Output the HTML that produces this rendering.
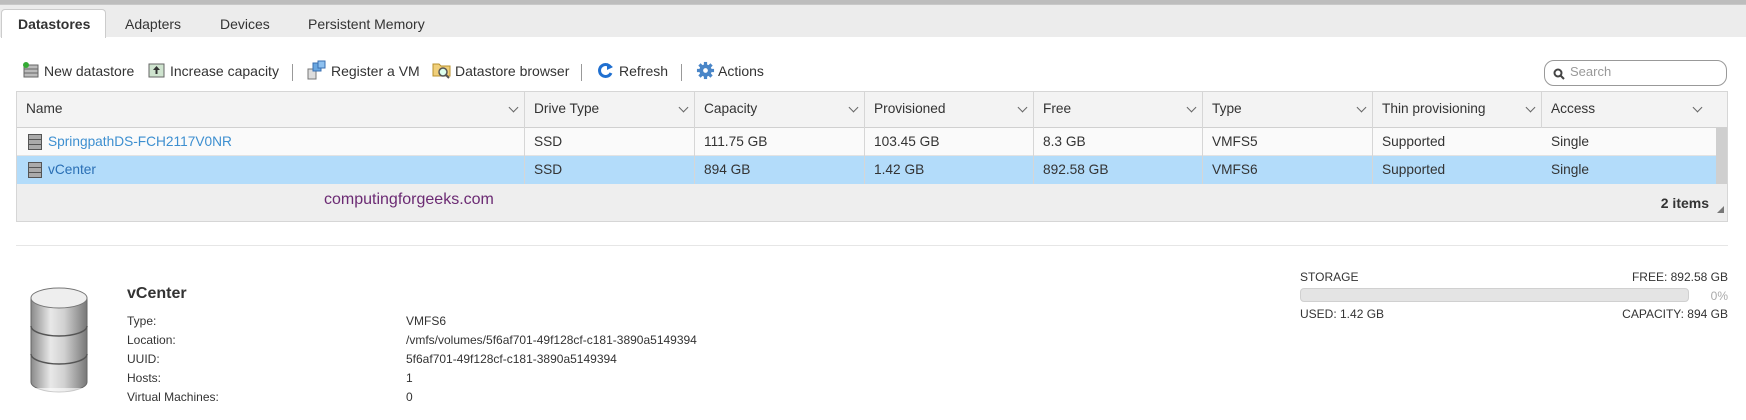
<!DOCTYPE html>
<html><head><meta charset="utf-8"><style>
*{margin:0;padding:0;box-sizing:border-box}
body{width:1746px;height:420px;background:#fff;font-family:"Liberation Sans",Arial,sans-serif;color:#333;position:relative;overflow:hidden;font-size:14px}
.a{position:absolute;white-space:nowrap}
.tabbar{position:absolute;left:0;top:4px;width:1746px;height:33px;background:#ececec;border-top:1px solid #c8c8c8}
.topline{position:absolute;left:0;top:0;width:1746px;height:4px;background:#bdbdbd}
.tab{position:absolute;top:16px;font-size:14px;color:#333}
.acttab{position:absolute;left:1px;top:9px;width:105px;height:29px;background:#fff;border:1px solid #ccc;border-bottom:none;border-radius:4px 4px 0 0}
.tb{position:absolute;top:63px;font-size:14px;color:#333}
.sep{position:absolute;top:64px;width:1px;height:17px;background:#999}
.tbl{position:absolute;left:16px;top:91px;width:1712px;height:131px;border:1px solid #d6d6d6;background:#eee}
.hdr{position:absolute;left:0;top:0;width:1710px;height:36px;background:#f3f3f3;border-bottom:1px solid #d0d0d0}
.r1{position:absolute;left:0;top:36px;width:1699px;height:28px;background:#fafafa;border-bottom:1px solid #e3e3e3}
.r2{position:absolute;left:0;top:64px;width:1699px;height:28px;background:#b3dcfa}
.vl{position:absolute;width:1px;background:#d6d6d6}
.cell{position:absolute;font-size:13.7px;color:#333}
.chev{position:absolute;width:7px;height:7px;border-right:1.3px solid #666;border-bottom:1.3px solid #666;transform:rotate(45deg);top:12px}
.lbl{position:absolute;left:127px;font-size:12px;color:#333}
.val{position:absolute;left:406px;font-size:12px;color:#333}
.st{position:absolute;font-size:12px;color:#333}
</style></head><body>
<div class="topline"></div>
<div class="tabbar"></div>
<div class="acttab"></div>
<div class="tab a" style="left:18px;font-weight:bold">Datastores</div>
<div class="tab a" style="left:125px">Adapters</div>
<div class="tab a" style="left:220px">Devices</div>
<div class="tab a" style="left:308px">Persistent Memory</div>

<svg class="a" style="left:22px;top:62px" width="18" height="16"><rect x="2" y="3" width="14" height="12" fill="#bbb" stroke="#666"/><line x1="2" y1="7" x2="16" y2="7" stroke="#666"/><line x1="2" y1="11" x2="16" y2="11" stroke="#666"/><circle cx="4" cy="3" r="3" fill="#3a3"/></svg>
<div class="tb a" style="left:44px">New datastore</div>
<svg class="a" style="left:148px;top:62px" width="18" height="16"><rect x="1" y="2" width="15" height="13" fill="#cfe4cf" stroke="#666"/><path d="M8.5 4 L5 8 H7.5 V12 H9.5 V8 H12 Z" fill="#333"/></svg>
<div class="tb a" style="left:170px">Increase capacity</div>
<div class="sep" style="left:292px"></div>
<svg class="a" style="left:307px;top:60px" width="20" height="20"><rect x="1" y="9" width="8" height="10" fill="#ddd" stroke="#777"/><rect x="6" y="3" width="8" height="8" fill="#6aa7e0" stroke="#3a6fb0"/><rect x="11" y="1" width="7" height="7" fill="#8ec1f0" stroke="#3a6fb0"/></svg>
<div class="tb a" style="left:331px">Register a VM</div>
<svg class="a" style="left:432px;top:60px" width="20" height="20"><path d="M1 4 H7 L9 6 H18 V16 H1 Z" fill="#f0cf7a" stroke="#b8902c"/><circle cx="11" cy="12" r="4" fill="#dfe" stroke="#555" stroke-width="1.5"/><line x1="14" y1="15" x2="17" y2="18" stroke="#555" stroke-width="2"/></svg>
<div class="tb a" style="left:455px">Datastore browser</div>
<div class="sep" style="left:581px"></div>
<svg class="a" style="left:597px;top:61px" width="18" height="18"><path d="M14 7 A6 6 0 1 0 14 12" fill="none" stroke="#1f6fd0" stroke-width="3"/><path d="M10 2 L16 6 L10 9 Z" fill="#1f6fd0"/></svg>
<div class="tb a" style="left:619px">Refresh</div>
<div class="sep" style="left:681px"></div>
<svg class="a" style="left:696px;top:61px" width="19" height="19" viewBox="0 0 20 20"><g fill="#4a86c8"><circle cx="10" cy="10" r="6.5"/><rect x="8.3" y="1" width="3.4" height="18"/><rect x="1" y="8.3" width="18" height="3.4"/><rect x="8.3" y="1" width="3.4" height="18" transform="rotate(45 10 10)"/><rect x="8.3" y="1" width="3.4" height="18" transform="rotate(-45 10 10)"/></g><circle cx="10" cy="10" r="2.5" fill="#fff"/></svg>
<div class="tb a" style="left:718px">Actions</div>

<div class="a" style="left:1544px;top:60px;width:183px;height:26px;border:1px solid #999;border-radius:10px;background:#fff"></div>
<svg class="a" style="left:1553px;top:68px" width="12" height="12"><circle cx="5" cy="5" r="3.5" fill="none" stroke="#444" stroke-width="2"/><line x1="7.5" y1="7.5" x2="11" y2="11" stroke="#444" stroke-width="2"/></svg>
<div class="a" style="left:1570px;top:64px;font-size:13px;color:#999">Search</div>

<div class="tbl">
 <div class="hdr"></div>
 <div class="r1"></div>
 <div class="r2"></div>
 <div class="a" style="left:1699px;top:36px;width:11px;height:56px;background:#cfcfcf"></div>
 <div class="vl" style="left:507px;top:0;height:92px"></div>
 <div class="vl" style="left:677px;top:0;height:92px"></div>
 <div class="vl" style="left:847px;top:0;height:92px"></div>
 <div class="vl" style="left:1016px;top:0;height:92px"></div>
 <div class="vl" style="left:1185px;top:0;height:92px"></div>
 <div class="vl" style="left:1355px;top:0;height:92px"></div>
 <div class="vl" style="left:1524px;top:0;height:36px"></div>
 <div class="cell a" style="left:9px;top:9px">Name</div><div class="chev" style="left:493px"></div>
 <div class="cell a" style="left:517px;top:9px">Drive Type</div><div class="chev" style="left:663px"></div>
 <div class="cell a" style="left:687px;top:9px">Capacity</div><div class="chev" style="left:833px"></div>
 <div class="cell a" style="left:857px;top:9px">Provisioned</div><div class="chev" style="left:1002px"></div>
 <div class="cell a" style="left:1026px;top:9px">Free</div><div class="chev" style="left:1171px"></div>
 <div class="cell a" style="left:1195px;top:9px">Type</div><div class="chev" style="left:1341px"></div>
 <div class="cell a" style="left:1365px;top:9px">Thin provisioning</div><div class="chev" style="left:1510px"></div>
 <div class="cell a" style="left:1534px;top:9px">Access</div><div class="chev" style="left:1677px"></div>

 <svg class="a" style="left:11px;top:42px" width="14" height="16"><rect x="0.5" y="0.5" width="13" height="15" fill="#aaa" stroke="#555"/><line x1="0" y1="5.5" x2="14" y2="5.5" stroke="#555"/><line x1="0" y1="10.5" x2="14" y2="10.5" stroke="#555"/></svg>
 <div class="cell a" style="left:31px;top:42px;color:#3d8fd0">SpringpathDS-FCH2117V0NR</div>
 <div class="cell a" style="left:517px;top:42px">SSD</div>
 <div class="cell a" style="left:687px;top:42px">111.75 GB</div>
 <div class="cell a" style="left:857px;top:42px">103.45 GB</div>
 <div class="cell a" style="left:1026px;top:42px">8.3 GB</div>
 <div class="cell a" style="left:1195px;top:42px">VMFS5</div>
 <div class="cell a" style="left:1365px;top:42px">Supported</div>
 <div class="cell a" style="left:1534px;top:42px">Single</div>

 <svg class="a" style="left:11px;top:70px" width="14" height="16"><rect x="0.5" y="0.5" width="13" height="15" fill="#aaa" stroke="#555"/><line x1="0" y1="5.5" x2="14" y2="5.5" stroke="#555"/><line x1="0" y1="10.5" x2="14" y2="10.5" stroke="#555"/></svg>
 <div class="cell a" style="left:31px;top:70px;color:#2a6fb5">vCenter</div>
 <div class="cell a" style="left:517px;top:70px">SSD</div>
 <div class="cell a" style="left:687px;top:70px">894 GB</div>
 <div class="cell a" style="left:857px;top:70px">1.42 GB</div>
 <div class="cell a" style="left:1026px;top:70px">892.58 GB</div>
 <div class="cell a" style="left:1195px;top:70px">VMFS6</div>
 <div class="cell a" style="left:1365px;top:70px">Supported</div>
 <div class="cell a" style="left:1534px;top:70px">Single</div>

 <div class="a" style="left:307px;top:99px;font-size:16px;color:#6b2a73">computingforgeeks.com</div>
 <div class="a" style="right:18px;top:103px;font-size:14px;font-weight:bold;color:#333">2 items</div>
 <svg class="a" style="right:2px;top:114px" width="8" height="8"><path d="M7 0 L7 7 L0 7 Z" fill="#777"/></svg>
</div>

<div class="a" style="left:16px;top:245px;width:1712px;height:1px;background:#e6e6e6"></div>

<svg class="a" style="left:28px;top:286px" width="62" height="128" viewBox="0 0 62 128">
<defs><linearGradient id="g" x1="0" x2="1"><stop offset="0" stop-color="#8a8a8a"/><stop offset=".35" stop-color="#e8e8e8"/><stop offset=".6" stop-color="#d0d0d0"/><stop offset="1" stop-color="#777"/></linearGradient>
<linearGradient id="f" x1="0" y1="0" x2="0" y2="1"><stop offset="0" stop-color="#fff" stop-opacity=".6"/><stop offset="1" stop-color="#fff" stop-opacity="1"/></linearGradient></defs>
<path d="M3 12 V96 A28 10 0 0 0 59 96 V12 Z" fill="url(#g)" stroke="#666"/>
<path d="M3 40 A28 10 0 0 0 59 40" fill="none" stroke="#555" stroke-width="1.5"/>
<path d="M3 68 A28 10 0 0 0 59 68" fill="none" stroke="#555" stroke-width="1.5"/>
<ellipse cx="31" cy="12" rx="28" ry="10" fill="#eee" stroke="#777"/>
<rect x="0" y="102" width="62" height="26" fill="url(#f)"/>
</svg>
<div class="a" style="left:127px;top:285px;font-size:16px;font-weight:bold;color:#333">vCenter</div>
<div class="lbl a" style="top:314px">Type:</div><div class="val a" style="top:314px">VMFS6</div>
<div class="lbl a" style="top:333px">Location:</div><div class="val a" style="top:333px">/vmfs/volumes/5f6af701-49f128cf-c181-3890a5149394</div>
<div class="lbl a" style="top:352px">UUID:</div><div class="val a" style="top:352px">5f6af701-49f128cf-c181-3890a5149394</div>
<div class="lbl a" style="top:371px">Hosts:</div><div class="val a" style="top:371px">1</div>
<div class="lbl a" style="top:390px">Virtual Machines:</div><div class="val a" style="top:390px">0</div>

<div class="st a" style="left:1300px;top:270px">STORAGE</div>
<div class="st a" style="right:18px;top:270px">FREE: 892.58 GB</div>
<div class="a" style="left:1300px;top:288px;width:389px;height:14px;background:#e4e4e4;border:1px solid #d0d0d0;border-radius:4px"></div>
<div class="st a" style="right:18px;top:289px;color:#aaa">0%</div>
<div class="st a" style="left:1300px;top:307px">USED: 1.42 GB</div>
<div class="st a" style="right:18px;top:307px">CAPACITY: 894 GB</div>
</body></html>
